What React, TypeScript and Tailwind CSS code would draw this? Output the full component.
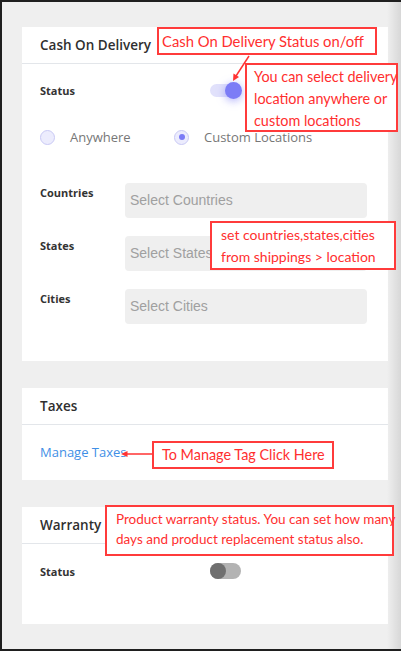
const ui = { fontFamily: '"Open Sans", "Noto Sans", sans-serif' };
const note = { fontFamily: 'Lato, "Noto Sans", sans-serif' };

function Toggle({ on }: { on: boolean }) {
  if (on) {
    return (
      <div className="relative h-[17px] w-[32px]">
        <div className="absolute left-0 top-[2px] h-[13px] w-[30px] rounded-full bg-[#e1e1fb]" />
        <div className="absolute right-0 top-0 h-[17px] w-[17px] rounded-full bg-[#7c7cf6] shadow-[0_2px_8px_rgba(124,124,246,0.6)]" />
      </div>
    );
  }
  return (
    <div className="relative h-[16px] w-[31px]">
      <div className="absolute left-0 top-0 h-[16px] w-[31px] rounded-full bg-[#b3b3b3]" />
      <div className="absolute left-0 top-0 h-[16px] w-[16px] rounded-full bg-[#6f6f6f]" />
    </div>
  );
}

function Radio({ checked, label }: { checked?: boolean; label: string }) {
  return (
    <div className="flex items-center">
      <span className="flex h-[15px] w-[15px] items-center justify-center rounded-full border border-[#c9c9f5] bg-[#ececfd]">
        {checked && <span className="h-[6px] w-[6px] rounded-full bg-[#7c7cf6]" />}
      </span>
      <span className="ml-[15px] text-[13px] text-[#777]">{label}</span>
    </div>
  );
}

function SelectRow({ label, placeholder }: { label: string; placeholder: string }) {
  return (
    <div className="flex">
      <div className="w-[85px] pt-[2px] text-[11px] font-bold text-[#333]">{label}</div>
      <div
        className="flex h-[35px] w-[242px] items-center rounded-[4px] bg-[#efefef] pl-[5px] text-[14px] text-[#a0a0a0]"
        style={{ fontFamily: '"Liberation Sans", Arial, sans-serif' }}
      >
        {placeholder}
      </div>
    </div>
  );
}

function CardHeader({ title }: { title: string }) {
  return (
    <div className="flex h-[37px] items-center border-b border-[#e3e6ea] px-[18px] text-[13.5px] font-semibold text-[#2f2f2f]">
      {title}
    </div>
  );
}

function Note({ className, children }: { className: string; children: React.ReactNode }) {
  return (
    <div
      className={"absolute whitespace-nowrap border-2 border-[#ff3b3b] bg-white text-[#ff2f2f] " + className}
      style={note}
    >
      {children}
    </div>
  );
}

export default function App() {
  return (
    <div className="relative h-[651px] w-[401px] overflow-hidden bg-[#1f1f1f] pb-[2px] pl-[2px] pt-[2px]" style={ui}>
      <div className="flex h-full flex-col gap-[27px] bg-[#efefef] pl-[20px] pt-[25px]">
        {/* Cash on delivery */}
        <div className="w-[366px] bg-white">
          <CardHeader title="Cash On Delivery" />
          <div className="px-[18px] pb-[37px]">
            <div className="flex items-center pt-[17px]">
              <div className="w-[170px] pt-[2px] text-[11px] font-bold text-[#333]">Status</div>
              <Toggle on />
            </div>
            <div className="flex items-center pt-[28px]">
              <div className="w-[134px]">
                <Radio label="Anywhere" />
              </div>
              <Radio checked label="Custom Locations" />
            </div>
            <div className="flex flex-col gap-[18px] pt-[36px]">
              <SelectRow label="Countries" placeholder="Select Countries" />
              <SelectRow label="States" placeholder="Select States" />
              <SelectRow label="Cities" placeholder="Select Cities" />
            </div>
          </div>
        </div>

        {/* Taxes */}
        <div className="w-[366px] bg-white">
          <CardHeader title="Taxes" />
          <div className="flex h-[55px] items-center px-[18px] pt-[1px] text-[13px] text-[#3f8fe6]">Manage Taxes</div>
        </div>

        {/* Warranty */}
        <div className="w-[366px] bg-white">
          <CardHeader title="Warranty" />
          <div className="flex items-center px-[18px] pb-[43px] pt-[18px]">
            <div className="w-[170px] pt-[2px] text-[11px] font-bold text-[#333]">Status</div>
            <Toggle on={false} />
          </div>
        </div>
      </div>

      {/* right edge shade */}
      <div className="absolute bottom-[2px] right-0 top-[2px] w-[14px] bg-gradient-to-r from-transparent to-black/10" />

      {/* annotations */}
      <Note className="left-[157px] top-[27px] h-[28px] w-[220px] pl-[3px] text-[14.8px] leading-[24px]">
        Cash On Delivery Status on/off
      </Note>
      <Note className="left-[245px] top-[63px] h-[69px] w-[153px] pl-[7px] pt-[1px] text-[14.4px] leading-[22px]">
        You can select delivery
        <br />
        location anywhere or
        <br />
        custom locations
      </Note>
      <Note className="left-[210px] top-[221px] h-[49px] w-[186px] pl-[9px] pt-[1px] text-[14px] leading-[22px]">
        set countries,states,cities
        <br />
        from shippings &gt; location
      </Note>
      <Note className="left-[152px] top-[441px] h-[28px] w-[182px] pl-[8px] text-[14.4px] leading-[24px]">
        To Manage Tag Click Here
      </Note>
      <Note className="left-[105px] top-[505px] h-[51px] w-[289px] pl-[9px] pt-[2px] text-[13.5px] leading-[20px]">
        Product warranty status. You can set how many
        <br />
        days and product replacement status also.
      </Note>

      <svg className="absolute left-0 top-0" width="401" height="651" viewBox="0 0 401 651" fill="none">
        <line x1="249" y1="56" x2="236" y2="76" stroke="#ff3333" strokeWidth="1.5" />
        <path d="M233 81 L233.5 73.5 L239 77 Z" fill="#ff3333" />
        <line x1="152" y1="454" x2="127" y2="454" stroke="#ff3333" strokeWidth="1.5" />
        <path d="M121 454 L127.5 451 L127.5 457 Z" fill="#ff3333" />
      </svg>
    </div>
  );
}
